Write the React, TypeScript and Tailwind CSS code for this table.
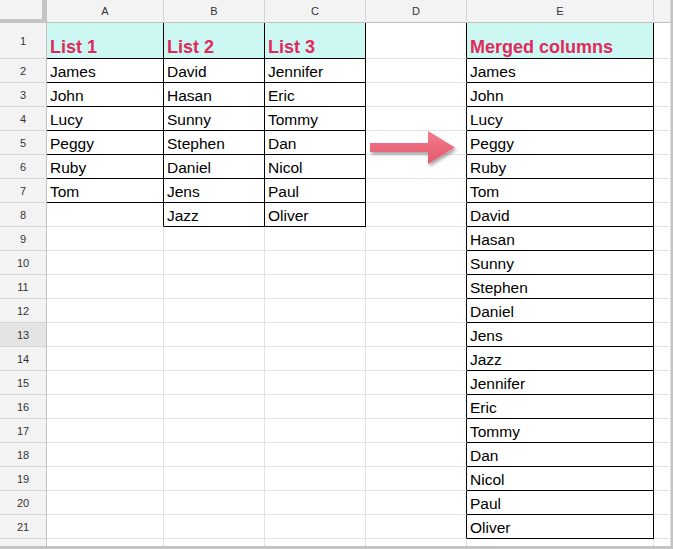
const listA = ["James", "John", "Lucy", "Peggy", "Ruby", "Tom"];
const listB = ["David", "Hasan", "Sunny", "Stephen", "Daniel", "Jens", "Jazz"];
const listC = ["Jennifer", "Eric", "Tommy", "Dan", "Nicol", "Paul", "Oliver"];
const merged = [...listA, ...listB, ...listC];

const headers = ["List 1", "List 2", "List 3", "", "Merged columns", ""];
const colLetters = ["A", "B", "C", "D", "E", ""];
const rows = Array.from({ length: 22 }, (_, i) => i + 1);

// which cells have the black outline
function boxed(r: number, c: number) {
  if (c === 1) return r >= 1 && r <= 7;
  if (c === 2 || c === 3) return r >= 1 && r <= 8;
  if (c === 5) return r >= 1 && r <= 21;
  return false;
}

function cellText(r: number, c: number) {
  if (r === 1) return headers[c - 1];
  const i = r - 2;
  if (c === 1) return listA[i] ?? "";
  if (c === 2) return listB[i] ?? "";
  if (c === 3) return listC[i] ?? "";
  if (c === 5) return merged[i] ?? "";
  return "";
}

function Cell({ r, c }: { r: number; c: number }) {
  const right = boxed(r, c) || boxed(r, c + 1) ? "border-r-black" : "border-r-[#e2e2e2]";
  const bottom = boxed(r, c) || boxed(r + 1, c) ? "border-b-black" : "border-b-[#e2e2e2]";
  const title = r === 1 && boxed(r, c);
  return (
    <div
      className={`flex items-end overflow-hidden whitespace-nowrap border-r border-b pl-[3px] leading-none ${right} ${bottom} ${
        title
          ? "bg-[#ccf7f2] pb-[2px] text-[18px] font-bold text-[#e02a5b]"
          : "bg-white pb-[3px] text-[15.5px] text-black"
      } ${r === 1 ? "h-[36px]" : "h-[24px]"}`}
    >
      {cellText(r, c)}
    </div>
  );
}

export default function App() {
  return (
    <div className="flex h-[549px] w-[673px] flex-col overflow-hidden bg-white font-['Liberation_Sans',Arial,sans-serif]">
      <div className="flex h-[546px] overflow-hidden">
        <div className="grid flex-1 grid-cols-[47px_117px_101px_101px_101px_187px_1fr] content-start">
          {/* column header row */}
          <div className="h-[23px] border-r-[5px] border-b-[4px] border-[#c4c4c4] bg-[#f3f3f3]" />
          {colLetters.map((l, i) => (
            <div
              key={i}
              className="flex h-[23px] items-center justify-center border-r border-b border-r-[#d4d4d4] border-b-[#c0c0c0] bg-[#f3f3f3] text-[11px] text-[#333]"
            >
              {l}
            </div>
          ))}

          {rows.map((r) => (
            <div key={r} className="contents">
              <div
                className={`flex items-center justify-center border-r border-b border-r-[#c0c0c0] border-b-[#d4d4d4] pt-[1px] text-[11px] text-[#333] ${
                  r === 13 ? "bg-[#e4e4e4]" : "bg-[#f3f3f3]"
                } ${r === 1 ? "h-[36px]" : "h-[24px]"}`}
              >
                {r}
              </div>
              {[1, 2, 3, 4, 5, 6].map((c) => (
                <Cell key={c} r={r} c={c} />
              ))}
            </div>
          ))}
        </div>
        <div className="w-[2px] bg-[#c4c4c4]" />
      </div>
      <div className="h-[3px] bg-[#c4c4c4]" />

      {/* arrow drawn over column D */}
      <svg className="absolute left-[366px] top-[126px]" width="96" height="48" viewBox="0 0 96 48">
        <defs>
          <filter id="sh" x="-20%" y="-30%" width="140%" height="170%">
            <feDropShadow dx="1.5" dy="2.5" stdDeviation="1.8" floodColor="#000" floodOpacity="0.35" />
          </filter>
          <linearGradient id="ar" x1="0" y1="0" x2="0" y2="1">
            <stop offset="0" stopColor="#f27d8c" />
            <stop offset="1" stopColor="#e4586d" />
          </linearGradient>
        </defs>
        <polygon
          points="4,17 62,17 62,5 89,21.5 62,38 62,26 4,26"
          fill="url(#ar)"
          filter="url(#sh)"
        />
      </svg>
    </div>
  );
}
